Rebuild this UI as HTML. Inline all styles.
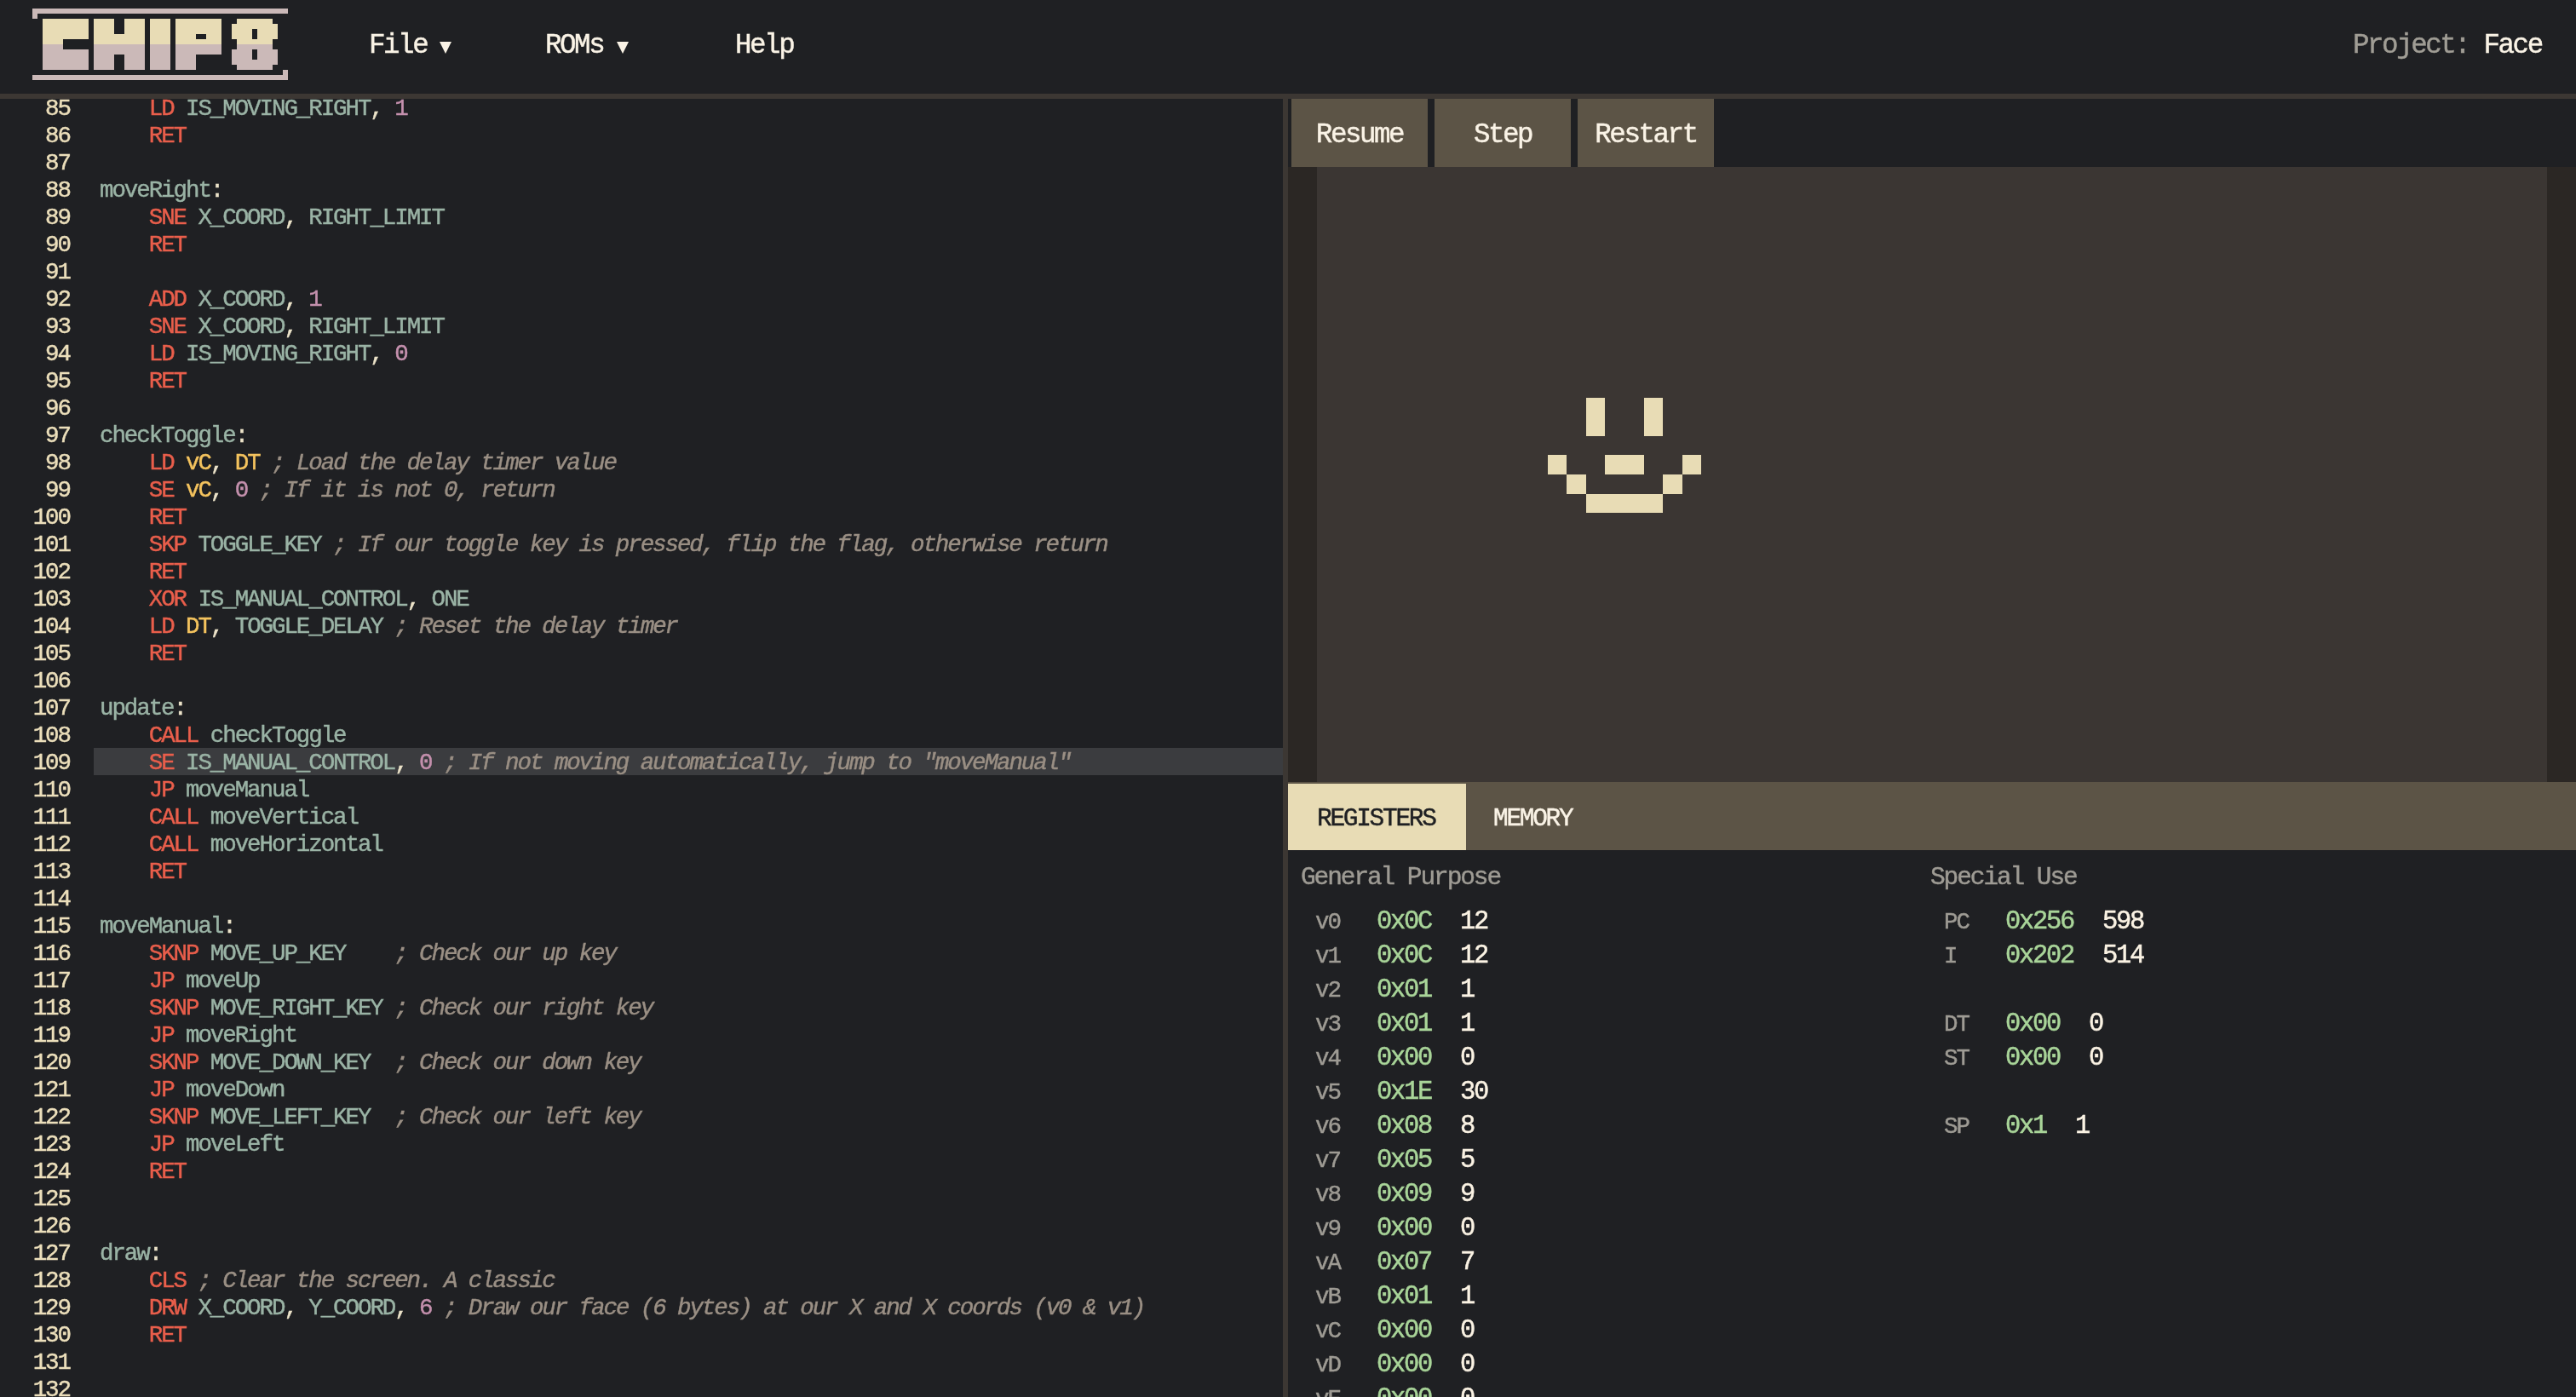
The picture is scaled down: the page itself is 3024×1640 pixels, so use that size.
<!DOCTYPE html><html><head><meta charset="utf-8"><title>CHIP-8</title><style>
*{margin:0;padding:0;box-sizing:border-box}
html,body{width:3024px;height:1640px;overflow:hidden;background:#1f2023}
body{position:relative;font-family:"Liberation Mono",monospace;-webkit-text-stroke:0.45px currentColor}
.wrap{position:absolute;left:0;top:0;width:3024px;height:1640px;will-change:transform}
.abs{position:absolute}
.logo{position:absolute;left:38px;top:10px}
.nav{position:absolute;font-size:32.5px;letter-spacing:-2.45px;color:#faf3e6;line-height:40px;white-space:pre}
.tri{position:absolute;width:0;height:0;border-left:7.4px solid transparent;border-right:7.4px solid transparent;border-top:14px solid #faf3e6}
.sep{position:absolute;left:0;top:110px;width:3024px;height:6px;background:#3c3733}
.vdiv{position:absolute;left:1506px;top:116px;width:6px;height:1524px;background:#3c3733}
.code{position:absolute;left:0;top:116px;width:1506px;height:1524px;overflow:hidden}
.codein{position:absolute;left:0;top:-116px;width:1506px;height:1640px}
.hlline{position:absolute;left:110px;top:878px;width:1396px;height:32px;background:#3b3c3f}
.ln{position:absolute;right:1424px;font-size:27.5px;letter-spacing:-2.05px;line-height:32px;color:#ecdfbb;white-space:pre;padding-top:2px}
.cl{position:absolute;left:117px;font-size:27.5px;letter-spacing:-2.08px;line-height:32px;white-space:pre;padding-top:2px}
b{font-weight:normal}
.k{color:#e95e4b}
.i{color:#9ab3a5}
.n{color:#c490ad}
.r{color:#f4c35e}
.p{color:#ece3c9}
.c{color:#9a8f84;font-style:italic}
.btn{position:absolute;top:116px;width:160px;height:80px;background:#5c5446;color:#faf3e6;font-size:32.5px;letter-spacing:-2.45px;text-align:center;line-height:80px}
.btn span{position:relative;top:3px}
.scrstrip{position:absolute;top:196px;height:722px;background:#2b2724}
.screen{position:absolute;left:1546px;top:196px;width:1444px;height:722px;background:#3b3633}
.px{position:absolute;width:22.56px;height:22.56px;background:#e8dcb5}
.tabbar{position:absolute;left:1512px;top:918px;width:1512px;height:80px;background:#5c5446}
.tab{position:absolute;top:920px;height:78px;font-size:29.5px;letter-spacing:-2.3px;line-height:82px}
.hd{position:absolute;font-size:29.5px;letter-spacing:-2.1px;color:#9e9b94;line-height:40px;white-space:pre}
.rr{position:absolute;font-size:30.5px;letter-spacing:-2.3px;line-height:40px;white-space:pre}
.rl{display:inline-block;width:72px;color:#9e9b94;font-size:27.5px;letter-spacing:-2.05px}
.rh{color:#a9d599}
.rd{color:#fbf3e4;margin-left:34px}
</style></head><body><div class="wrap"><svg class="logo" width="300" height="84" viewBox="0 0 300 84" shape-rendering="crispEdges"><rect x="0" y="0" width="300" height="6" fill="#cbb9b8"/><rect x="0" y="6" width="6" height="6" fill="#cbb9b8"/><rect x="12" y="12" width="54" height="6" fill="#e8dcb5"/><rect x="72" y="12" width="24" height="6" fill="#e8dcb5"/><rect x="108" y="12" width="24" height="6" fill="#e8dcb5"/><rect x="138" y="12" width="24" height="6" fill="#e8dcb5"/><rect x="168" y="12" width="54" height="6" fill="#e8dcb5"/><rect x="240" y="12" width="42" height="6" fill="#e8dcb5"/><rect x="12" y="18" width="54" height="6" fill="#e8dcb5"/><rect x="72" y="18" width="24" height="6" fill="#e8dcb5"/><rect x="108" y="18" width="24" height="6" fill="#e8dcb5"/><rect x="138" y="18" width="24" height="6" fill="#e8dcb5"/><rect x="168" y="18" width="54" height="6" fill="#e8dcb5"/><rect x="234" y="18" width="54" height="6" fill="#e8dcb5"/><rect x="12" y="24" width="54" height="6" fill="#e8dcb5"/><rect x="72" y="24" width="24" height="6" fill="#e8dcb5"/><rect x="108" y="24" width="24" height="6" fill="#e8dcb5"/><rect x="138" y="24" width="24" height="6" fill="#e8dcb5"/><rect x="168" y="24" width="54" height="6" fill="#e8dcb5"/><rect x="234" y="24" width="24" height="6" fill="#e8dcb5"/><rect x="264" y="24" width="24" height="6" fill="#e8dcb5"/><rect x="12" y="30" width="54" height="6" fill="#e8dcb5"/><rect x="72" y="30" width="60" height="6" fill="#e8dcb5"/><rect x="138" y="30" width="24" height="6" fill="#e8dcb5"/><rect x="168" y="30" width="24" height="6" fill="#e8dcb5"/><rect x="204" y="30" width="18" height="6" fill="#e8dcb5"/><rect x="234" y="30" width="24" height="6" fill="#e8dcb5"/><rect x="264" y="30" width="24" height="6" fill="#e8dcb5"/><rect x="12" y="36" width="24" height="6" fill="#e8dcb5"/><rect x="72" y="36" width="60" height="6" fill="#e8dcb5"/><rect x="138" y="36" width="24" height="6" fill="#e8dcb5"/><rect x="168" y="36" width="54" height="6" fill="#e8dcb5"/><rect x="240" y="36" width="42" height="6" fill="#e8dcb5"/><rect x="12" y="42" width="24" height="6" fill="#cbb9b8"/><rect x="72" y="42" width="60" height="6" fill="#cbb9b8"/><rect x="138" y="42" width="24" height="6" fill="#cbb9b8"/><rect x="168" y="42" width="54" height="6" fill="#cbb9b8"/><rect x="240" y="42" width="42" height="6" fill="#cbb9b8"/><rect x="12" y="48" width="54" height="6" fill="#cbb9b8"/><rect x="72" y="48" width="60" height="6" fill="#cbb9b8"/><rect x="138" y="48" width="24" height="6" fill="#cbb9b8"/><rect x="168" y="48" width="54" height="6" fill="#cbb9b8"/><rect x="234" y="48" width="24" height="6" fill="#cbb9b8"/><rect x="264" y="48" width="24" height="6" fill="#cbb9b8"/><rect x="12" y="54" width="54" height="6" fill="#cbb9b8"/><rect x="72" y="54" width="24" height="6" fill="#cbb9b8"/><rect x="108" y="54" width="24" height="6" fill="#cbb9b8"/><rect x="138" y="54" width="24" height="6" fill="#cbb9b8"/><rect x="168" y="54" width="24" height="6" fill="#cbb9b8"/><rect x="234" y="54" width="24" height="6" fill="#cbb9b8"/><rect x="264" y="54" width="24" height="6" fill="#cbb9b8"/><rect x="12" y="60" width="54" height="6" fill="#cbb9b8"/><rect x="72" y="60" width="24" height="6" fill="#cbb9b8"/><rect x="108" y="60" width="24" height="6" fill="#cbb9b8"/><rect x="138" y="60" width="24" height="6" fill="#cbb9b8"/><rect x="168" y="60" width="24" height="6" fill="#cbb9b8"/><rect x="234" y="60" width="54" height="6" fill="#cbb9b8"/><rect x="12" y="66" width="54" height="6" fill="#cbb9b8"/><rect x="72" y="66" width="24" height="6" fill="#cbb9b8"/><rect x="108" y="66" width="24" height="6" fill="#cbb9b8"/><rect x="138" y="66" width="24" height="6" fill="#cbb9b8"/><rect x="168" y="66" width="24" height="6" fill="#cbb9b8"/><rect x="240" y="66" width="42" height="6" fill="#cbb9b8"/><rect x="294" y="72" width="6" height="6" fill="#cbb9b8"/><rect x="0" y="78" width="300" height="6" fill="#cbb9b8"/></svg><div class="nav" style="left:433px;top:34px">File</div><div class="tri" style="left:516px;top:49px"></div><div class="nav" style="left:640px;top:34px">ROMs</div><div class="tri" style="left:724px;top:49px"></div><div class="nav" style="left:863px;top:34px">Help</div><div class="nav" style="left:2762px;top:34px"><span style="color:#a09d95">Project:</span> Face</div><div class="sep"></div><div class="code"><div class="codein"><div class="hlline"></div><div class="ln" style="top:110px">85</div><div class="ln" style="top:142px">86</div><div class="ln" style="top:174px">87</div><div class="ln" style="top:206px">88</div><div class="ln" style="top:238px">89</div><div class="ln" style="top:270px">90</div><div class="ln" style="top:302px">91</div><div class="ln" style="top:334px">92</div><div class="ln" style="top:366px">93</div><div class="ln" style="top:398px">94</div><div class="ln" style="top:430px">95</div><div class="ln" style="top:462px">96</div><div class="ln" style="top:494px">97</div><div class="ln" style="top:526px">98</div><div class="ln" style="top:558px">99</div><div class="ln" style="top:590px">100</div><div class="ln" style="top:622px">101</div><div class="ln" style="top:654px">102</div><div class="ln" style="top:686px">103</div><div class="ln" style="top:718px">104</div><div class="ln" style="top:750px">105</div><div class="ln" style="top:782px">106</div><div class="ln" style="top:814px">107</div><div class="ln" style="top:846px">108</div><div class="ln" style="top:878px">109</div><div class="ln" style="top:910px">110</div><div class="ln" style="top:942px">111</div><div class="ln" style="top:974px">112</div><div class="ln" style="top:1006px">113</div><div class="ln" style="top:1038px">114</div><div class="ln" style="top:1070px">115</div><div class="ln" style="top:1102px">116</div><div class="ln" style="top:1134px">117</div><div class="ln" style="top:1166px">118</div><div class="ln" style="top:1198px">119</div><div class="ln" style="top:1230px">120</div><div class="ln" style="top:1262px">121</div><div class="ln" style="top:1294px">122</div><div class="ln" style="top:1326px">123</div><div class="ln" style="top:1358px">124</div><div class="ln" style="top:1390px">125</div><div class="ln" style="top:1422px">126</div><div class="ln" style="top:1454px">127</div><div class="ln" style="top:1486px">128</div><div class="ln" style="top:1518px">129</div><div class="ln" style="top:1550px">130</div><div class="ln" style="top:1582px">131</div><div class="ln" style="top:1614px">132</div><div class="cl" style="top:110px">    <b class="k">LD</b> <b class="i">IS_MOVING_RIGHT</b><b class="p">,</b> <b class="n">1</b></div><div class="cl" style="top:142px">    <b class="k">RET</b></div><div class="cl" style="top:174px"></div><div class="cl" style="top:206px"><b class="i">moveRight</b><b class="p">:</b></div><div class="cl" style="top:238px">    <b class="k">SNE</b> <b class="i">X_COORD</b><b class="p">,</b> <b class="i">RIGHT_LIMIT</b></div><div class="cl" style="top:270px">    <b class="k">RET</b></div><div class="cl" style="top:302px"></div><div class="cl" style="top:334px">    <b class="k">ADD</b> <b class="i">X_COORD</b><b class="p">,</b> <b class="n">1</b></div><div class="cl" style="top:366px">    <b class="k">SNE</b> <b class="i">X_COORD</b><b class="p">,</b> <b class="i">RIGHT_LIMIT</b></div><div class="cl" style="top:398px">    <b class="k">LD</b> <b class="i">IS_MOVING_RIGHT</b><b class="p">,</b> <b class="n">0</b></div><div class="cl" style="top:430px">    <b class="k">RET</b></div><div class="cl" style="top:462px"></div><div class="cl" style="top:494px"><b class="i">checkToggle</b><b class="p">:</b></div><div class="cl" style="top:526px">    <b class="k">LD</b> <b class="r">vC</b><b class="p">,</b> <b class="r">DT</b> <i class="c">; Load the delay timer value</i></div><div class="cl" style="top:558px">    <b class="k">SE</b> <b class="r">vC</b><b class="p">,</b> <b class="n">0</b> <i class="c">; If it is not 0, return</i></div><div class="cl" style="top:590px">    <b class="k">RET</b></div><div class="cl" style="top:622px">    <b class="k">SKP</b> <b class="i">TOGGLE_KEY</b> <i class="c">; If our toggle key is pressed, flip the flag, otherwise return</i></div><div class="cl" style="top:654px">    <b class="k">RET</b></div><div class="cl" style="top:686px">    <b class="k">XOR</b> <b class="i">IS_MANUAL_CONTROL</b><b class="p">,</b> <b class="i">ONE</b></div><div class="cl" style="top:718px">    <b class="k">LD</b> <b class="r">DT</b><b class="p">,</b> <b class="i">TOGGLE_DELAY</b> <i class="c">; Reset the delay timer</i></div><div class="cl" style="top:750px">    <b class="k">RET</b></div><div class="cl" style="top:782px"></div><div class="cl" style="top:814px"><b class="i">update</b><b class="p">:</b></div><div class="cl" style="top:846px">    <b class="k">CALL</b> <b class="i">checkToggle</b></div><div class="cl" style="top:878px">    <b class="k">SE</b> <b class="i">IS_MANUAL_CONTROL</b><b class="p">,</b> <b class="n">0</b> <i class="c">; If not moving automatically, jump to &quot;moveManual&quot;</i></div><div class="cl" style="top:910px">    <b class="k">JP</b> <b class="i">moveManual</b></div><div class="cl" style="top:942px">    <b class="k">CALL</b> <b class="i">moveVertical</b></div><div class="cl" style="top:974px">    <b class="k">CALL</b> <b class="i">moveHorizontal</b></div><div class="cl" style="top:1006px">    <b class="k">RET</b></div><div class="cl" style="top:1038px"></div><div class="cl" style="top:1070px"><b class="i">moveManual</b><b class="p">:</b></div><div class="cl" style="top:1102px">    <b class="k">SKNP</b> <b class="i">MOVE_UP_KEY</b>    <i class="c">; Check our up key</i></div><div class="cl" style="top:1134px">    <b class="k">JP</b> <b class="i">moveUp</b></div><div class="cl" style="top:1166px">    <b class="k">SKNP</b> <b class="i">MOVE_RIGHT_KEY</b> <i class="c">; Check our right key</i></div><div class="cl" style="top:1198px">    <b class="k">JP</b> <b class="i">moveRight</b></div><div class="cl" style="top:1230px">    <b class="k">SKNP</b> <b class="i">MOVE_DOWN_KEY</b>  <i class="c">; Check our down key</i></div><div class="cl" style="top:1262px">    <b class="k">JP</b> <b class="i">moveDown</b></div><div class="cl" style="top:1294px">    <b class="k">SKNP</b> <b class="i">MOVE_LEFT_KEY</b>  <i class="c">; Check our left key</i></div><div class="cl" style="top:1326px">    <b class="k">JP</b> <b class="i">moveLeft</b></div><div class="cl" style="top:1358px">    <b class="k">RET</b></div><div class="cl" style="top:1390px"></div><div class="cl" style="top:1422px"></div><div class="cl" style="top:1454px"><b class="i">draw</b><b class="p">:</b></div><div class="cl" style="top:1486px">    <b class="k">CLS</b> <i class="c">; Clear the screen. A classic</i></div><div class="cl" style="top:1518px">    <b class="k">DRW</b> <b class="i">X_COORD</b><b class="p">,</b> <b class="i">Y_COORD</b><b class="p">,</b> <b class="n">6</b> <i class="c">; Draw our face (6 bytes) at our X and X coords (v0 &amp; v1)</i></div><div class="cl" style="top:1550px">    <b class="k">RET</b></div><div class="cl" style="top:1582px"></div><div class="cl" style="top:1614px"></div></div></div><div class="vdiv"></div><div class="btn" style="left:1516px"><span>Resume</span></div><div class="btn" style="left:1684px"><span>Step</span></div><div class="btn" style="left:1852px"><span>Restart</span></div><div class="scrstrip" style="left:1512px;width:34px"></div><div class="scrstrip" style="left:2990px;width:34px"></div><div class="screen"></div><div class="px" style="left:1861.88px;top:466.75px"></div><div class="px" style="left:1929.56px;top:466.75px"></div><div class="px" style="left:1861.88px;top:489.31px"></div><div class="px" style="left:1929.56px;top:489.31px"></div><div class="px" style="left:1816.75px;top:534.44px"></div><div class="px" style="left:1884.44px;top:534.44px"></div><div class="px" style="left:1907.00px;top:534.44px"></div><div class="px" style="left:1974.69px;top:534.44px"></div><div class="px" style="left:1839.31px;top:557.00px"></div><div class="px" style="left:1952.12px;top:557.00px"></div><div class="px" style="left:1861.88px;top:579.56px"></div><div class="px" style="left:1884.44px;top:579.56px"></div><div class="px" style="left:1907.00px;top:579.56px"></div><div class="px" style="left:1929.56px;top:579.56px"></div><div class="tabbar"></div><div class="tab" style="left:1512px;width:209px;background:#e8dcb5;color:#1f2023;padding-left:34px">REGISTERS</div><div class="tab" style="left:1721px;color:#faf3e6;padding-left:32px">MEMORY</div><div class="hd" style="left:1527px;top:1010px">General Purpose</div><div class="hd" style="left:2266px;top:1010px">Special Use</div><div class="rr" style="left:1544px;top:1062px"><span class="rl">v0</span><span class="rh">0x0C</span><span class="rd">12</span></div><div class="rr" style="left:1544px;top:1102px"><span class="rl">v1</span><span class="rh">0x0C</span><span class="rd">12</span></div><div class="rr" style="left:1544px;top:1142px"><span class="rl">v2</span><span class="rh">0x01</span><span class="rd">1</span></div><div class="rr" style="left:1544px;top:1182px"><span class="rl">v3</span><span class="rh">0x01</span><span class="rd">1</span></div><div class="rr" style="left:1544px;top:1222px"><span class="rl">v4</span><span class="rh">0x00</span><span class="rd">0</span></div><div class="rr" style="left:1544px;top:1262px"><span class="rl">v5</span><span class="rh">0x1E</span><span class="rd">30</span></div><div class="rr" style="left:1544px;top:1302px"><span class="rl">v6</span><span class="rh">0x08</span><span class="rd">8</span></div><div class="rr" style="left:1544px;top:1342px"><span class="rl">v7</span><span class="rh">0x05</span><span class="rd">5</span></div><div class="rr" style="left:1544px;top:1382px"><span class="rl">v8</span><span class="rh">0x09</span><span class="rd">9</span></div><div class="rr" style="left:1544px;top:1422px"><span class="rl">v9</span><span class="rh">0x00</span><span class="rd">0</span></div><div class="rr" style="left:1544px;top:1462px"><span class="rl">vA</span><span class="rh">0x07</span><span class="rd">7</span></div><div class="rr" style="left:1544px;top:1502px"><span class="rl">vB</span><span class="rh">0x01</span><span class="rd">1</span></div><div class="rr" style="left:1544px;top:1542px"><span class="rl">vC</span><span class="rh">0x00</span><span class="rd">0</span></div><div class="rr" style="left:1544px;top:1582px"><span class="rl">vD</span><span class="rh">0x00</span><span class="rd">0</span></div><div class="rr" style="left:1544px;top:1622px"><span class="rl">vE</span><span class="rh">0x00</span><span class="rd">0</span></div><div class="rr" style="left:1544px;top:1662px"><span class="rl">vF</span><span class="rh">0x00</span><span class="rd">0</span></div><div class="rr" style="left:2282px;top:1062px"><span class="rl">PC</span><span class="rh">0x256</span><span class="rd">598</span></div><div class="rr" style="left:2282px;top:1102px"><span class="rl">I</span><span class="rh">0x202</span><span class="rd">514</span></div><div class="rr" style="left:2282px;top:1182px"><span class="rl">DT</span><span class="rh">0x00</span><span class="rd">0</span></div><div class="rr" style="left:2282px;top:1222px"><span class="rl">ST</span><span class="rh">0x00</span><span class="rd">0</span></div><div class="rr" style="left:2282px;top:1302px"><span class="rl">SP</span><span class="rh">0x1</span><span class="rd">1</span></div></div></body></html>
